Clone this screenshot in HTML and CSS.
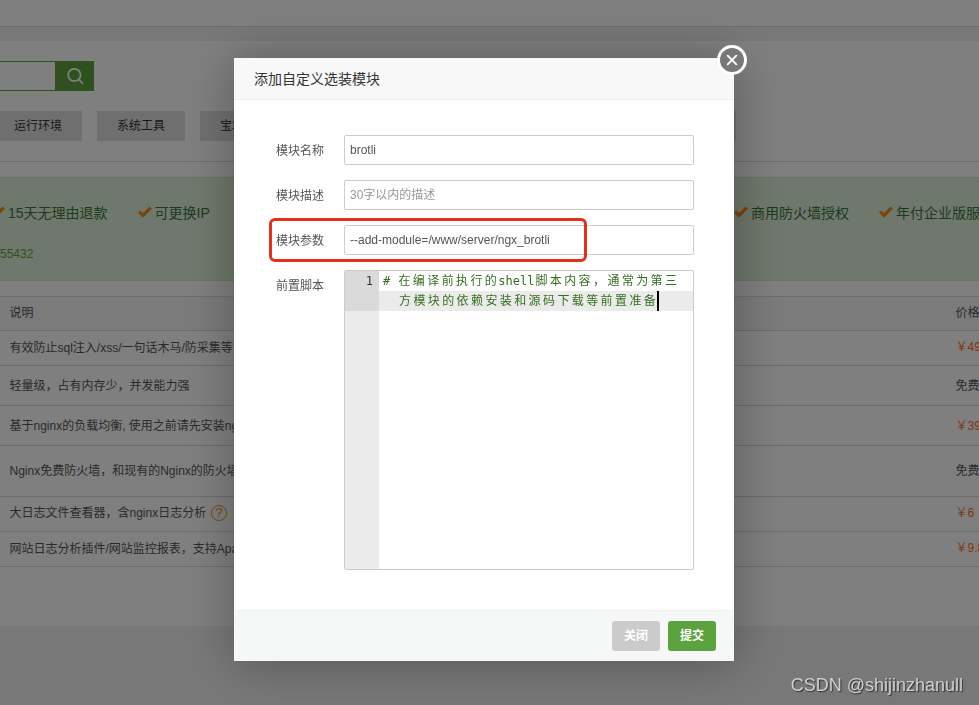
FILE: index.html
```html
<!DOCTYPE html>
<html lang="zh-CN">
<head>
  <meta charset="UTF-8" />
  <meta name="viewport" content="width=device-width, initial-scale=1" />
  <title>添加自定义选装模块</title>
  <link rel="stylesheet" href="styles.css">
</head>
<body>
  <div class="topbar"></div>

  <main class="panel">
    <div class="search">
      <div class="search-input"></div>
      <button class="search-btn">
        <svg width="18" height="18" viewBox="0 0 18 18" fill="none" stroke="#fff" stroke-width="1.8">
          <circle cx="8.4" cy="8" r="6.2" />
          <path d="M12.6 12.4l4.6 4.4" />
        </svg>
      </button>
    </div>

    <div class="tabs">
      <span class="tab">运行环境</span>
      <span class="tab">系统工具</span>
      <span class="tab">宝塔插件</span>
      <span class="tab tab-last"></span>
    </div>

    <div class="notice">
      <div class="features">
        <div class="feature-group">
          <span class="feature"><svg class="check" viewBox="0 0 14 12"><path d="M0 6.8L2.4 4.4L5 7L11.6 0.4L14 2.8L5 11.8Z" /></svg>15天无理由退款</span>
          <span class="feature"><svg class="check" viewBox="0 0 14 12"><path d="M0 6.8L2.4 4.4L5 7L11.6 0.4L14 2.8L5 11.8Z" /></svg>可更换IP</span>
        </div>
        <div class="feature-group">
          <span class="feature"><svg class="check" viewBox="0 0 14 12"><path d="M0 6.8L2.4 4.4L5 7L11.6 0.4L14 2.8L5 11.8Z" /></svg>商用防火墙授权</span>
          <span class="feature"><svg class="check" viewBox="0 0 14 12"><path d="M0 6.8L2.4 4.4L5 7L11.6 0.4L14 2.8L5 11.8Z" /></svg>年付企业版服</span>
        </div>
      </div>
      <div class="qq">55432</div>
    </div>

    <div class="table">
      <div class="row head"><span>说明</span><span>价格</span></div>
      <div class="row"><span>有效防止sql注入/xss/一句话木马/防采集等常见</span><span class="price">￥49</span></div>
      <div class="row mid"><span>轻量级，占有内存少，并发能力强</span><span>免费</span></div>
      <div class="row mid"><span>基于nginx的负载均衡, 使用之前请先安装nginx</span><span class="price">￥39</span></div>
      <div class="row tall"><span>Nginx免费防火墙，和现有的Nginx的防火墙</span><span>免费</span></div>
      <div class="row"><span>大日志文件查看器，含nginx日志分析<i class="help">?</i></span><span class="price">￥6</span></div>
      <div class="row"><span>网站日志分析插件/网站监控报表，支持Apache</span><span class="price">￥9.8</span></div>
    </div>
  </main>

  <div class="shade"></div>

  <div class="modal">
    <div class="modal-title">添加自定义选装模块</div>
    <div class="modal-close">
      <svg width="12" height="12" viewBox="0 0 12 12" stroke="#fff" stroke-width="1.9" stroke-linecap="round">
        <path d="M1.7 1.7L10.3 10.3M10.3 1.7L1.7 10.3" />
      </svg>
    </div>
    <div class="modal-body">
      <div class="line">
        <label>模块名称</label>
        <div class="field">brotli</div>
      </div>
      <div class="line">
        <label>模块描述</label>
        <div class="field placeholder">30字以内的描述</div>
      </div>
      <div class="line">
        <label>模块参数</label>
        <div class="field">--add-module=/www/server/ngx_brotli</div>
        <div class="mark"></div>
      </div>
      <div class="line">
        <label>前置脚本</label>
        <div class="editor">
          <div class="gutter"><div class="gutter-num">1</div></div>
          <div class="code">
            <div class="code-line"># <span class="cjk">在编译前执行的</span>shell<span class="cjk">脚本内容，通常为第三</span></div>
            <div class="code-line active"><span class="cjk">方模块的依赖安装和源码下载等前置准备</span><i class="cursor"></i></div>
          </div>
        </div>
      </div>
    </div>
    <div class="modal-footer">
      <button class="btn btn-close">关闭</button>
      <button class="btn btn-submit">提交</button>
    </div>
  </div>

  <div class="watermark">CSDN @shijinzhanull</div>
</body>
</html>
```
FILE: styles.css
```css
* {
  box-sizing: border-box;
}

html, body {
  margin: 0;
  padding: 0;
}

body {
  height: 705px;
  overflow: hidden;
  background: #f0f0f0;
  color: #555;
  font-family: "Liberation Sans", "Noto Sans CJK SC", sans-serif;
  font-size: 12px;
}

button {
  border: 0;
  padding: 0;
  font-family: inherit;
}

.topbar {
  height: 27px;
  margin-bottom: 14px;
  background: #fff;
  border-bottom: 1px solid #dcdcdc;
}

.panel {
  height: 585px;
  padding-top: 20px;
  background: #fff;
  overflow: hidden;
}

.search {
  display: flex;
  height: 30px;
}

.search-input {
  width: 55px;
  border: 1px solid #5ca33f;
  border-width: 1px 0;
}

.search-btn {
  display: flex;
  align-items: center;
  justify-content: center;
  width: 39px;
  background: #5ca33f;
}

.tabs {
  display: flex;
  gap: 15px;
  width: 742px;
  margin: 20px 0 0 -6px;
  padding-bottom: 20px;
}

.tab {
  width: 88px;
  height: 30px;
  line-height: 31px;
  text-align: center;
  background: #dfdfdf;
  color: #333;
}

.tab-last {
  margin-left: auto;
}

.notice {
  position: relative;
  height: 104px;
  margin-top: 16px;
  padding-top: 23px;
  background: #dff0d8;
  border: 1px solid #d6e9c6;
  border-width: 1px 0;
}

/* divider between the tabs and the notice */
.notice::before {
  content: "";
  position: absolute;
  top: -17px;
  left: 0;
  right: 0;
  height: 1px;
  background: #d8d8d8;
}

.features {
  display: grid;
  grid-template-columns: 743px 500px;
  margin-left: -9px;
  height: 22px;
  font-size: 14px;
  color: #3c763d;
}

.feature-group {
  display: flex;
  gap: 30px;
}

.feature {
  display: flex;
  align-items: center;
  gap: 3px;
  white-space: nowrap;
}

.check {
  width: 14px;
  height: 12px;
  fill: #f08a1a;
}

.qq {
  margin-top: 22px;
  line-height: 18px;
  color: #5ca33f;
}

.table {
  margin-top: 15px;
  border-top: 1px solid #ddd;
}

.row {
  display: grid;
  grid-template-columns: 946px 200px;
  align-items: center;
  height: 35px;
  padding-left: 9.5px;
  padding-bottom: 4px;
  border-bottom: 1px solid #d8d8d8;
  white-space: nowrap;
}

.head {
  height: 34px;
  background: #f6f6f6;
}

.mid {
  height: 40px;
  padding-bottom: 2px;
}

.tall {
  height: 51px;
}

.price {
  padding-bottom: 1px;
  color: #fc6d26;
}

.help {
  display: inline-block;
  width: 16px;
  height: 16px;
  margin-left: 5px;
  border: 1px solid #f08a1a;
  border-radius: 50%;
  line-height: 14px;
  text-align: center;
  font-size: 13px;
  font-style: normal;
  color: #f08a1a;
}

.shade {
  position: fixed;
  inset: 0;
  background: rgba(0, 0, 0, 0.5);
}

.modal {
  position: fixed;
  top: 58px;
  left: 234px;
  width: 500px;
  height: 603px;
  display: flex;
  flex-direction: column;
  background: #fff;
  border-radius: 2px 2px 0 0;
  box-shadow: 1px 1px 50px rgba(0, 0, 0, 0.3);
}

.modal-title {
  height: 42px;
  padding-left: 20px;
  line-height: 43px;
  font-size: 14px;
  color: #333;
  background: #f8f8f8;
  border-bottom: 1px solid #eee;
}

.modal-close {
  position: absolute;
  top: -13px;
  right: -13px;
  display: flex;
  align-items: center;
  justify-content: center;
  width: 30px;
  height: 30px;
  border: 3px solid #fff;
  border-radius: 50%;
  background: #787878;
}

.modal-body {
  flex: 1;
  display: flex;
  flex-direction: column;
  gap: 15px;
  padding: 35px 40px 0 0;
}

.line {
  position: relative;
  display: flex;
  gap: 20px;
}

.line label {
  width: 90px;
  height: 30px;
  line-height: 32px;
  text-align: right;
  color: #555;
}

.field {
  width: 350px;
  height: 30px;
  padding-left: 5px;
  border: 1px solid #ccc;
  border-radius: 2px;
  line-height: 28px;
  color: #555;
}

.placeholder {
  color: #999;
}

.mark {
  position: absolute;
  top: -7px;
  left: 35px;
  width: 318px;
  height: 44px;
  border: 3px solid #e3301a;
  border-radius: 6px;
}

.editor {
  display: flex;
  width: 350px;
  height: 300px;
  border: 1px solid #ccc;
  border-radius: 2px;
  font-family: "DejaVu Sans Mono", "Noto Sans CJK SC", monospace;
  line-height: 20px;
}

.gutter {
  width: 34px;
  background: #ebebeb;
}

.gutter-num {
  height: 40px;
  padding-right: 6px;
  text-align: right;
  color: #333;
  background: #dadada;
}

.code {
  flex: 1;
  color: #35701f;
}

.code-line {
  display: flex;
  height: 20px;
  padding-left: 4px;
  white-space: pre;
}

.code-line.active {
  padding-left: 19px;
  background: #ebebeb;
}

/* each glyph sits in a cell two columns wide */
.cjk {
  padding-left: 1px;
  margin-right: -1px;
  letter-spacing: 2.4px;
}

.cursor {
  width: 2px;
  height: 20px;
  background: #000;
}

.modal-footer {
  display: flex;
  justify-content: flex-end;
  gap: 8px;
  height: 51px;
  padding: 10px 18px 0 0;
  background: #f6f8f8;
  border-top: 1px solid #edf1f2;
}

.btn {
  width: 48px;
  height: 30px;
  border-radius: 3px;
  line-height: 28px;
  font-size: 12px;
  font-weight: bold;
  color: #fff;
}

.btn-close {
  background: #cbcbcb;
}

.btn-submit {
  background: #5ca33f;
}

.watermark {
  position: fixed;
  right: 16px;
  bottom: 9px;
  line-height: 22px;
  font-size: 18px;
  color: #d0d0d0;
  text-shadow: 1px 1px 1px #333;
}
```
